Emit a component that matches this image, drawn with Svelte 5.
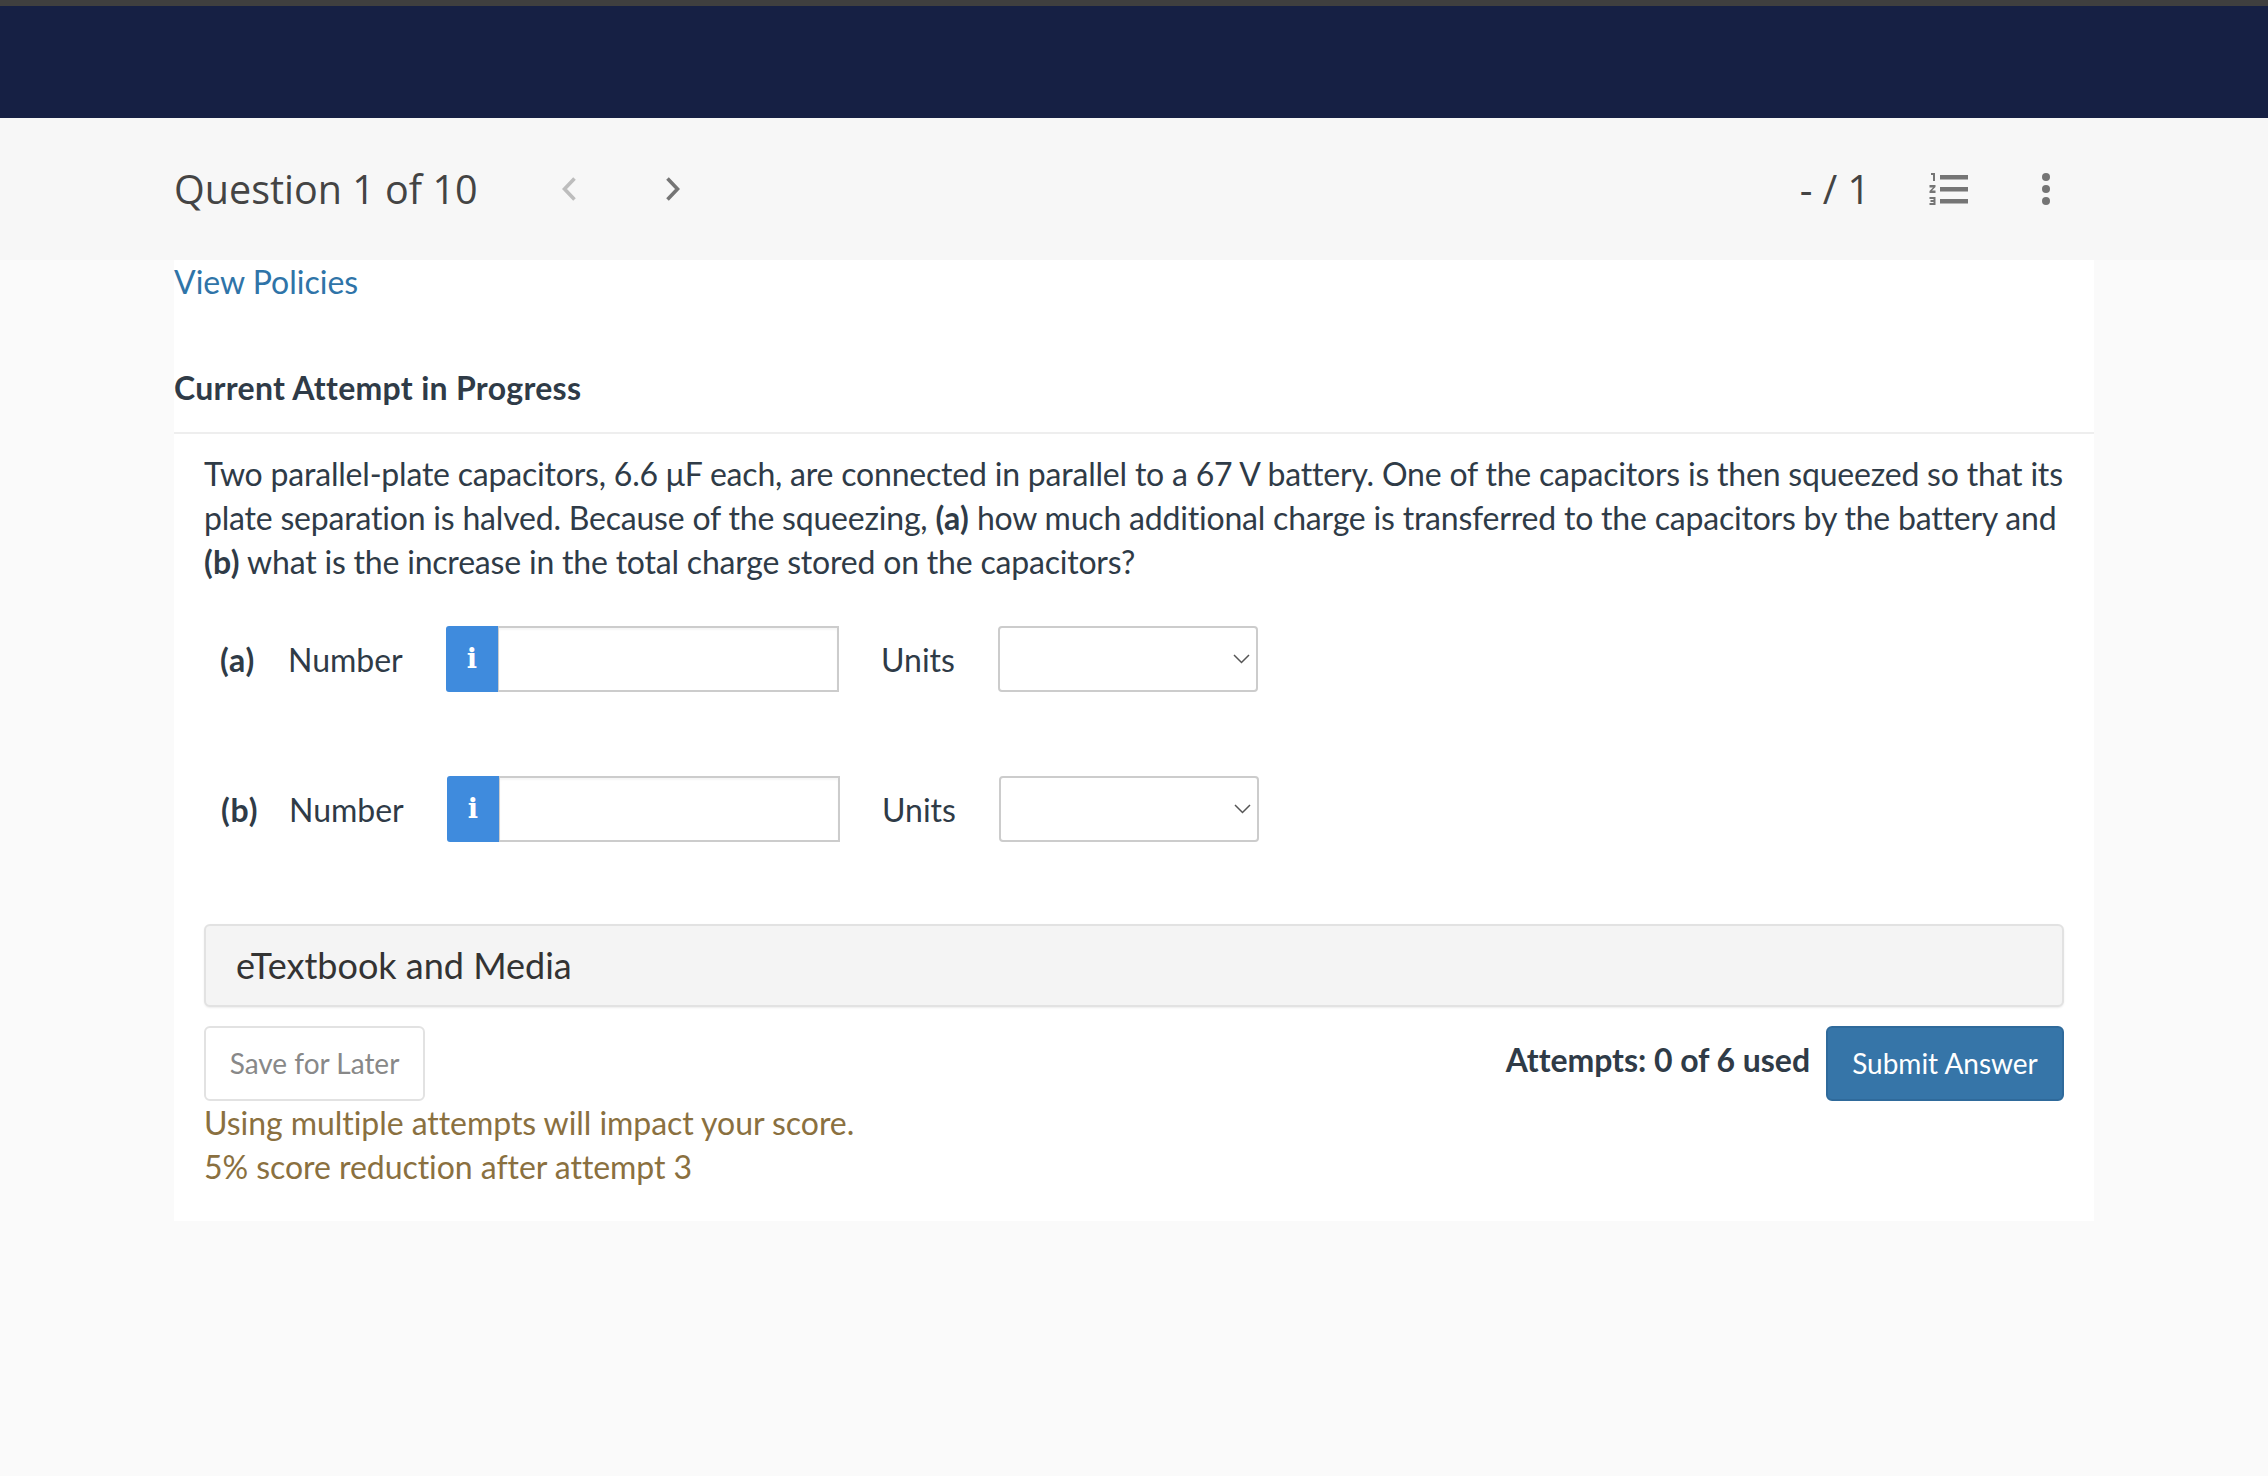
<script>
  const parts = [
    { id: 'a', label: '(a)' },
    { id: 'b', label: '(b)' }
  ];
</script>

<div class="page">
  <div class="topbar"></div>

  <header class="qhead">
    <div class="qtitle">Question 1 of 10</div>
    <button class="nav prev" aria-label="Previous">
      <svg width="18" height="26" viewBox="0 0 18 26"><path d="M14.500 2.500 4.500 13l10 10.500" fill="none" stroke="#bdbdbd" stroke-width="3.600"/></svg>
    </button>
    <button class="nav next" aria-label="Next">
      <svg width="18" height="26" viewBox="0 0 18 26"><path d="M3.500 2.500 13.500 13l-10 10.500" fill="none" stroke="#757575" stroke-width="3.600"/></svg>
    </button>
    <div class="score">- / 1</div>
    <svg class="list-icon" width="40" height="34" viewBox="0 0 40 34" fill="#757575" aria-hidden="true">
      <rect x="11" y="3" width="28" height="4.500"/>
      <rect x="11" y="15" width="28" height="4.500"/>
      <rect x="11" y="27" width="28" height="4.500"/>
      <path d="M2 1h4v8H4V3H2zM0.500 13h6v2l-3.500 3.500h3.500V21h-6v-2L4 15.500H0.500zM0.500 25h6v8h-6v-2h4v-1h-3v-2h3v-1h-4z"/>
    </svg>
    <svg class="more-icon" width="10" height="34" viewBox="0 0 10 34" fill="#757575" aria-hidden="true">
      <circle cx="5" cy="5" r="4"/>
      <circle cx="5" cy="17" r="4"/>
      <circle cx="5" cy="29" r="4"/>
    </svg>
  </header>

  <main class="sheet">
    <a class="policies" href="#policies">View Policies</a>
    <h2 class="attempt">Current Attempt in Progress</h2>

    <div class="content">
      <p class="question">
        Two parallel-plate capacitors, 6.6 μF each, are connected in parallel to a 67 V battery. One of the capacitors is then squeezed so that its plate separation is halved. Because of the squeezing, <b>(a)</b> how much additional charge is transferred to the capacitors by the battery and <b>(b)</b> what is the increase in the total charge stored on the capacitors?
      </p>

      {#each parts as part}
        <div class="row row-{part.id}">
          <span class="part">{part.label}</span>
          <span class="num-label">Number</span>
          <span class="info">i</span>
          <input class="answer" type="text" aria-label="{part.label} Number" />
          <span class="units-label">Units</span>
          <span class="select-wrap">
            <select class="units" aria-label="{part.label} Units"><option></option></select>
            <svg class="caret" width="17" height="10" viewBox="0 0 17 10"><path d="M1 1 8.500 8.500 16 1" fill="none" stroke="#555" stroke-width="1.500"/></svg>
          </span>
        </div>
      {/each}

      <div class="panel">eTextbook and Media</div>

      <div class="actions">
        <button class="save">Save for Later</button>
        <div class="attempts">Attempts: 0 of 6 used</div>
        <button class="submit">Submit Answer</button>
      </div>
      <div class="warning">
        <div>Using multiple attempts will impact your score.</div>
        <div>5% score reduction after attempt 3</div>
      </div>
    </div>
  </main>
</div>

<style>
  :global(body) {
    margin: 0;
    background: #fafafa;
  }

  .page {
    min-height: 1476px;
    background: #fafafa;
    font-family: Lato, "Liberation Sans", sans-serif;
    color: #2f3b47;
  }

  .topbar {
    height: 112px;
    border-top: 6px solid #3f3f3f;
    background: #162044;
  }

  .qhead {
    height: 142px;
    padding: 0 174px;
    box-sizing: border-box;
    display: flex;
    align-items: center;
    background: #f7f7f7;
  }

  .qtitle {
    font-family: "Open Sans", sans-serif;
    font-size: 39.5px;
    font-weight: 400;
    color: #444;
    width: 386px;
    white-space: nowrap;
  }

  .nav {
    border: 0;
    padding: 0;
    background: none;
    display: flex;
  }

  .nav.next {
    margin-left: 86px;
  }

  .score {
    margin-left: auto;
    font-family: "Open Sans", sans-serif;
    font-size: 39.5px;
    font-weight: 400;
    color: #444;
    white-space: nowrap;
  }

  .list-icon {
    margin-left: 59px;
    display: block;
  }

  .more-icon {
    margin-left: 72px;
    margin-right: 43px;
    display: block;
  }

  .sheet {
    width: 1920px;
    height: 961px;
    margin-left: 174px;
    background: #fff;
  }

  .policies {
    display: block;
    width: max-content;
    font-size: 32px;
    line-height: 44px;
    color: #2f74a8;
    text-decoration: none;
  }

  .attempt {
    margin: 0;
    padding-top: 62px;
    height: 66px;
    border-bottom: 2px solid #eee;
    font-size: 32px;
    line-height: 44px;
    font-weight: 700;
    letter-spacing: 0.3px;
    color: #2f3b47;
  }

  .content {
    padding: 0 30px;
  }

  .question {
    margin: 18px 0 0;
    font-size: 32px;
    line-height: 44px;
    letter-spacing: -0.2px;
    color: #2f3b47;
  }

  .question b {
    font-weight: 700;
    letter-spacing: 0.3px;
  }

  .row {
    display: flex;
    align-items: center;
    height: 66px;
    margin-top: 42px;
    padding-left: 16px;
    font-size: 32px;
  }

  .row-b {
    margin-top: 84px;
    padding-left: 17px;
  }

  .part {
    width: 68px;
    font-weight: 700;
    letter-spacing: 0.8px;
  }

  .num-label {
    width: 158px;
  }

  .info {
    width: 52px;
    height: 66px;
    box-sizing: border-box;
    border-radius: 3px 0 0 3px;
    background: #3f8bdd;
    color: #fff;
    font-family: "DejaVu Serif", serif;
    font-weight: 700;
    font-size: 27px;
    line-height: 66px;
    text-align: center;
  }

  .answer {
    width: 341px;
    height: 66px;
    box-sizing: border-box;
    margin: 0;
    border: 2px solid #ccc;
    border-left-width: 1px;
    border-radius: 0;
    outline: none;
    background: #fff;
    box-shadow: inset 0 2px 2px rgba(0, 0, 0, 0.04);
  }

  .units-label {
    width: 117px;
    padding-left: 42px;
    box-sizing: content-box;
  }

  .select-wrap {
    position: relative;
    display: block;
    width: 260px;
    height: 66px;
  }

  .units {
    display: block;
    width: 100%;
    height: 100%;
    box-sizing: border-box;
    appearance: none;
    border: 2px solid #ccc;
    border-radius: 4px;
    background: #fff;
  }

  .caret {
    position: absolute;
    right: 8px;
    top: 28px;
    pointer-events: none;
  }

  .panel {
    height: 83px;
    margin-top: 82px;
    box-sizing: border-box;
    padding-left: 30px;
    border: 2px solid #e2e2e2;
    border-radius: 6px;
    background: #f4f4f4;
    box-shadow: 0 1px 2px rgba(0, 0, 0, 0.08);
    font-size: 36px;
    line-height: 78px;
    color: #333;
  }

  .actions {
    display: flex;
    align-items: flex-start;
    margin-top: 19px;
  }

  .save {
    width: 221px;
    height: 75px;
    box-sizing: border-box;
    padding: 0 0 2px;
    border: 2px solid #e2e2e2;
    border-radius: 6px;
    background: #fff;
    color: #888;
    font-family: inherit;
    font-size: 28px;
  }

  .attempts {
    margin-left: auto;
    margin-right: 16px;
    font-size: 32px;
    line-height: 44px;
    font-weight: 700;
    letter-spacing: -0.05px;
    padding-top: 12px;
    color: #2f3b47;
  }

  .submit {
    width: 238px;
    height: 75px;
    box-sizing: border-box;
    padding: 0 0 2px;
    border: 2px solid #2f6a9b;
    border-radius: 6px;
    background: #3675a8;
    color: #fff;
    font-family: inherit;
    font-size: 28px;
  }

  .warning {
    font-size: 32px;
    line-height: 44px;
    letter-spacing: -0.05px;
    color: #8a7040;
  }
</style>
